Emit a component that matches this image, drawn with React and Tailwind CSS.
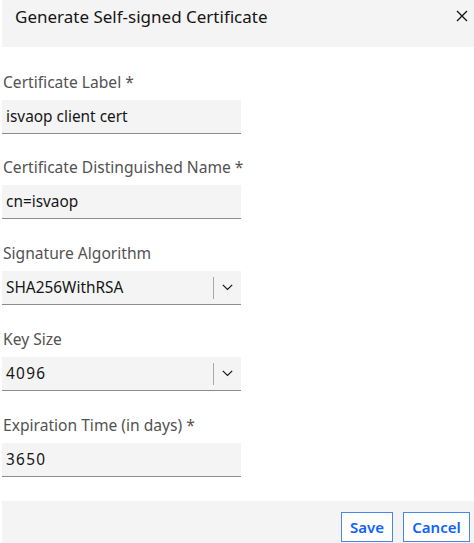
import React from "react";

const font = { fontFamily: '"Noto Sans", "Open Sans", sans-serif' };

function Label({ children }) {
  return (
    <div className="h-[20px] leading-[20px] text-[15.6px] text-[#525252] pl-[1px]">{children}</div>
  );
}

function TextInput({ value, numeric }) {
  return (
    <div className="mt-[8px] w-[239px] h-[34px] bg-[#f4f4f4] border-b border-[#8d8d8d] flex items-center pl-[4px] text-[15.4px] text-[#161616]">
      <span className={numeric ? "tracking-[1.3px]" : ""}>{value}</span>
    </div>
  );
}

function Select({ value, numeric }) {
  return (
    <div className="mt-[8px] w-[239px] h-[34px] bg-[#f4f4f4] border-b border-[#8d8d8d] flex items-center text-[15.4px] text-[#161616]">
      <div className={numeric ? "flex-1 pl-[4px] tracking-[1.3px]" : "flex-1 pl-[4px]"}>{value}</div>
      <div className="w-px h-[22px] bg-[#a8a8a8]" />
      <div className="w-[27px] flex items-center justify-center">
        <svg width="11" height="7" viewBox="0 0 11 7" fill="none">
          <path d="M0.8 0.8 L5.5 5.5 L10.2 0.8" stroke="#161616" strokeWidth="1.2" />
        </svg>
      </div>
    </div>
  );
}

function Field({ label, children, gap }) {
  return (
    <div className={gap}>
      <Label>{label}</Label>
      {children}
    </div>
  );
}

export default function App() {
  return (
    <div className="w-[474px] h-[543px] bg-white flex flex-col overflow-hidden" style={font}>
      <div className="ml-[2px] h-[47px] bg-[#f4f4f4] flex justify-between pl-[13px] pr-[6px] pt-[5px]">
        <div className="text-[17px] leading-[24px] text-[#161616]">Generate Self-signed Certificate</div>
        <svg width="12" height="12" viewBox="0 0 12 12" className="mt-[5px]">
          <path d="M1 1 L11 11 M11 1 L1 11" stroke="#161616" strokeWidth="1.4" />
        </svg>
      </div>
      <div className="pl-[2px]">
        <Field label="Certificate Label *" gap="mt-[25px]">
          <TextInput value="isvaop client cert" />
        </Field>
        <Field label="Certificate Distinguished Name *" gap="mt-[23px]">
          <TextInput value="cn=isvaop" />
        </Field>
        <Field label="Signature Algorithm" gap="mt-[24px]">
          <Select value="SHA256WithRSA" />
        </Field>
        <Field label="Key Size" gap="mt-[24px]">
          <Select value="4096" numeric />
        </Field>
        <Field label="Expiration Time (in days) *" gap="mt-[24px]">
          <TextInput value="3650" numeric />
        </Field>
      </div>
      <div className="ml-[2px] mt-[24px] flex-1 bg-[#f4f4f4] flex justify-end items-start pt-[11px] pr-[4px] gap-[10px]">
        <button className="h-[30px] w-[52px] bg-white border border-[#4a86f0] text-[#0f62fe] font-semibold text-[15px] leading-none" style={font}>
          Save
        </button>
        <button className="h-[30px] w-[67px] bg-white border border-[#4a86f0] text-[#0f62fe] font-semibold text-[15px] leading-none" style={font}>
          Cancel
        </button>
      </div>
    </div>
  );
}
